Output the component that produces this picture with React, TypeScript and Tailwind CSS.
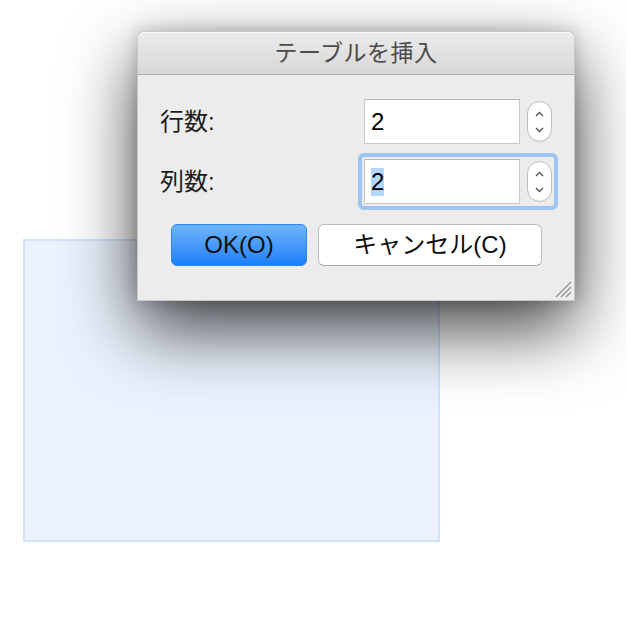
import React from 'react'

const font = { fontFamily: '"Liberation Sans", "Noto Sans CJK JP", sans-serif' }

function Stepper() {
  return (
    <div className="w-[25px] h-[41px] rounded-full border border-[#bdbdbd] bg-white flex flex-col items-center justify-center gap-[10px] shadow-[inset_0_-1px_0_rgba(0,0,0,0.05)]">
      <svg width="9" height="6" viewBox="0 0 9 6">
        <path d="M1 5 L4.5 1.5 L8 5" fill="none" stroke="#555" strokeWidth="1.4" />
      </svg>
      <svg width="9" height="6" viewBox="0 0 9 6">
        <path d="M1 1 L4.5 4.5 L8 1" fill="none" stroke="#555" strokeWidth="1.4" />
      </svg>
    </div>
  )
}

function NumberRow({ label, focused }: { label: string; focused?: boolean }) {
  return (
    <div className="flex items-center">
      <span className="text-[24px] leading-none text-[#1c1c1c] w-[198px]">{label}</span>
      <div
        className={`flex items-center gap-[7px] p-[2px] border-4 rounded-[6px] ${
          focused ? 'border-[#9cc5f1]' : 'border-transparent'
        }`}
      >
        <div className="w-[156px] h-[45px] bg-white border border-[#c9c9c9] border-t-[#b4b4b4] flex items-center pl-[6px]">
          <span
            className={`text-[24px] leading-[28px] text-black ${focused ? 'bg-[#b3d6fd]' : ''}`}
          >
            2
          </span>
        </div>
        <Stepper />
      </div>
    </div>
  )
}

export default function App() {
  return (
    <div className="relative w-[626px] h-[624px] bg-white overflow-hidden" style={font}>
      {/* table preview */}
      <div className="ml-[23px] mt-[239px] w-[417px] h-[303px] bg-[#ebf2fd] border-2 border-[#d1e3fa]" />

      {/* dialog */}
      <div className="absolute left-[137px] top-[31px] w-[438px] h-[270px] rounded-t-[7px] bg-[#ececec] border border-black/15 shadow-[0_28px_70px_rgba(0,0,0,0.75),0_0_16px_rgba(0,0,0,0.2)] flex flex-col">
        <div className="h-[43px] rounded-t-[7px] bg-gradient-to-b from-[#ececec] to-[#d7d7d7] border-b border-[#b1b1b1] flex items-center justify-center shadow-[inset_0_1px_0_rgba(255,255,255,0.8)]">
          <span className="text-[23px] leading-none text-[#4b4b4b] tracking-[0.5px]">テーブルを挿入</span>
        </div>

        <div className="relative flex-1 pl-[22px] pt-[18px]">
          <div className="flex flex-col gap-[3px]">
            <NumberRow label="行数:" />
            <NumberRow label="列数:" focused />
          </div>

          <div className="flex gap-[11px] mt-[14px] ml-[11px]">
            <div className="w-[136px] h-[42px] rounded-[6px] bg-gradient-to-b from-[#6db4fb] to-[#1a7ffa] border border-[#2c86f0] flex items-center justify-center">
              <span className="text-[24px] leading-none text-[#0d0d0d]">OK(O)</span>
            </div>
            <div className="w-[224px] h-[42px] rounded-[6px] bg-white border border-[#bcbcbc] border-b-[#a8a8a8] flex items-center justify-center">
              <span className="text-[24px] leading-none text-[#0d0d0d]">キャンセル(C)</span>
            </div>
          </div>

          {/* resize grip */}
          <svg className="absolute right-[2px] bottom-[2px]" width="20" height="20" viewBox="0 0 20 20">
            <path d="M19 4 L4 19 M19 9 L9 19 M19 14 L14 19" stroke="#8d8d8d" strokeWidth="1.2" />
          </svg>
        </div>
      </div>
    </div>
  )
}
